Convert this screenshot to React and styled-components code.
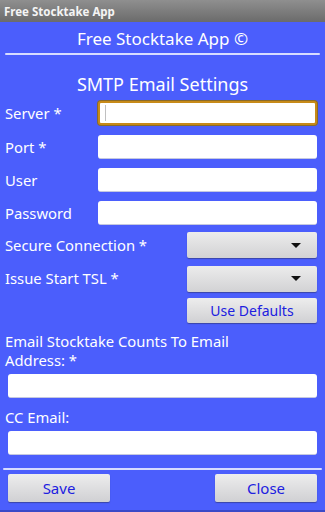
import { styled, createGlobalStyle } from "styled-components";

const GlobalStyle = createGlobalStyle`
  html, body {
    margin: 0;
    padding: 0;
    background: #4b5efc;
  }
  * {
    box-sizing: border-box;
  }
`;

const Screen = styled.div`
  width: 325px;
  height: 512px;
  display: flex;
  flex-direction: column;
  background: #4b5efc;
  font-family: "Noto Sans", "DejaVu Sans", sans-serif;
  color: #ffffff;
  overflow: hidden;
  border-bottom: 2px solid #3a49c8;
`;

const TitleBar = styled.div`
  height: 22px;
  padding-left: 4px;
  display: flex;
  align-items: center;
  background: linear-gradient(#8f8f8f, #6b6b6b);
  font-size: 11.5px;
  font-weight: 700;
  color: #f4f4f4;
`;

const Header = styled.h1`
  margin: 0;
  padding-top: 6px;
  height: 30px;
  text-align: center;
  font-size: 17px;
  font-weight: 400;
  line-height: 22px;
`;

const Rule = styled.div`
  height: 2px;
  margin: ${(p) => p.$margin};
  background: #d7dcff;
  border-radius: 1px;
`;

const SectionTitle = styled.h2`
  margin: 0;
  padding-top: 18px;
  height: 46px;
  text-align: center;
  font-size: 18px;
  font-weight: 400;
  line-height: 22px;
`;

const Form = styled.div`
  display: flex;
  flex-direction: column;
  padding: 0 8px 0 5px;
`;

const Row = styled.div`
  display: flex;
  align-items: center;
  justify-content: space-between;
  height: ${(p) => p.$height || 24}px;
  margin-bottom: ${(p) => p.$gap ?? 9}px;
`;

const Label = styled.span`
  font-size: 14.8px;
  line-height: 19px;
`;

const Input = styled.div`
  width: ${(p) => p.$width || 219}px;
  height: 24px;
  background: #ffffff;
  border-radius: 3px;
  border-bottom: 1px solid #c4c8e0;
  position: relative;
  ${(p) =>
    p.$focused &&
    `
    border: 2px solid #c78a18;
    box-shadow: 0 0 0 1px #8a6a2a;
  `}
`;

const Caret = styled.span`
  position: absolute;
  left: 5px;
  top: 2px;
  bottom: 2px;
  width: 1px;
  background: #c0c0c0;
`;

const Spinner = styled.div`
  width: 130px;
  height: 26px;
  border-radius: 2px;
  background: linear-gradient(#ececec, #d2d2d4);
  box-shadow: 0 1px 1px #3a45a8;
  display: flex;
  align-items: center;
  justify-content: flex-end;
  padding-right: 16px;
`;

const Arrow = styled.span`
  width: 0;
  height: 0;
  border-left: 5px solid transparent;
  border-right: 5px solid transparent;
  border-top: 5px solid #111111;
`;

const GreyButton = styled.button`
  width: ${(p) => p.$width}px;
  height: ${(p) => p.$height || 26}px;
  border: none;
  border-radius: 2px;
  background: linear-gradient(#ededed, #d0d0d3);
  box-shadow: 0 1px 1px #3a45a8;
  font-family: inherit;
  font-size: ${(p) => p.$size || 14}px;
  color: #2020e0;
  padding: 0;
`;

const EmailLabel = styled.div`
  padding: 0 0 4px 0;
  font-size: 14.8px;
  line-height: 19px;
`;

const FullInput = styled(Input)`
  width: 309px;
  margin-left: 3px;
  margin-bottom: ${(p) => p.$gap || 0}px;
`;

const Footer = styled.div`
  display: flex;
  justify-content: space-between;
  padding: 4px 8px 0 8px;
`;

export default function App() {
  return (
    <>
      <GlobalStyle />
      <Screen>
        <TitleBar>Free Stocktake App</TitleBar>
        <Header>Free Stocktake App ©</Header>
        <Rule $margin="1px 5px 0 5px" />
        <SectionTitle>SMTP Email Settings</SectionTitle>
        <Form>
          <Row $gap={10}>
            <Label>Server *</Label>
            <Input $focused>
              <Caret />
            </Input>
          </Row>
          <Row>
            <Label>Port *</Label>
            <Input />
          </Row>
          <Row>
            <Label>User</Label>
            <Input />
          </Row>
          <Row $gap={7}>
            <Label>Password</Label>
            <Input />
          </Row>
          <Row $height={26} $gap={7}>
            <Label>Secure Connection *</Label>
            <Spinner>
              <Arrow />
            </Spinner>
          </Row>
          <Row $height={27} $gap={6}>
            <Label>Issue Start TSL *</Label>
            <Spinner>
              <Arrow />
            </Spinner>
          </Row>
          <Row $height={25} $gap={9}>
            <span />
            <GreyButton $width={130} $height={25}>
              Use Defaults
            </GreyButton>
          </Row>
          <EmailLabel>
            Email Stocktake Counts To Email
            <br />
            Address: *
          </EmailLabel>
          <FullInput $gap={10} />
          <EmailLabel>CC Email:</EmailLabel>
          <FullInput />
        </Form>
        <Rule $margin="13px 3px 0 3px" />
        <Footer>
          <GreyButton $width={102} $height={28} $size={15}>
            Save
          </GreyButton>
          <GreyButton $width={102} $height={28} $size={15}>
            Close
          </GreyButton>
        </Footer>
      </Screen>
    </>
  );
}
